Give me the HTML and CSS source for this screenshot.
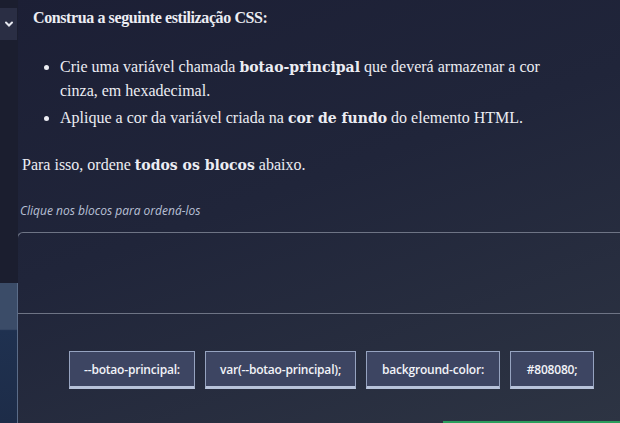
FILE: index.html
```html
<!DOCTYPE html>
<html lang="pt-BR">
<head>
  <meta charset="UTF-8" />
  <meta name="viewport" content="width=device-width, initial-scale=1.0" />
  <title>Exercício CSS</title>
  <link rel="stylesheet" href="styles.css">
</head>
<body>
  <aside class="side">
    <button class="side-toggle">
      <svg width="10" height="8" viewBox="0 0 10 8"><path d="M2 2.5 L5 5.5 L8 2.5" fill="none" stroke="#e6e8f0" stroke-width="2" stroke-linecap="round"/></svg>
    </button>
    <div class="side-panel"></div>
  </aside>

  <main class="content">
    <h2 class="task-title">Construa a seguinte estilização CSS:</h2>
    <ul class="task-list">
      <li>Crie uma variável chamada <strong>botao-principal</strong> que deverá armazenar a cor cinza, em hexadecimal.</li>
      <li>Aplique a cor da variável criada na <strong>cor de fundo</strong> do elemento HTML.</li>
    </ul>
    <p class="task-note">Para isso, ordene <strong>todos os blocos</strong> abaixo.</p>

    <p class="hint">Clique nos blocos para ordená-los</p>
    <div class="dropzone"></div>

    <div class="blocks">
      <button class="block">--botao-principal:</button>
      <button class="block">var(--botao-principal);</button>
      <button class="block">background-color:</button>
      <button class="block">#808080;</button>
    </div>

    <div class="footer">
      <button class="btn-next"></button>
    </div>
  </main>
</body>
</html>
```

FILE: styles.css
```css
* { box-sizing: border-box; }

body {
  margin: 0;
  width: 620px;
  height: 423px;
  overflow: hidden;
  display: flex;
  background: linear-gradient(160deg, #1c1f35 0%, #20253a 45%, #2d3443 100%);
  color: #ecedf3;
  font-family: 'Liberation Serif', serif;
}

.side {
  width: 18px;
  flex-shrink: 0;
  display: flex;
  flex-direction: column;
  justify-content: space-between;
  padding-top: 8px;
  background: #1b1e2f;
}

.side-toggle {
  width: 17px;
  height: 32px;
  border: none;
  padding: 0;
  background: #2a2e44;
  display: flex;
  justify-content: center;
  align-items: center;
}

.side-panel {
  height: 140px;
  border-right: 1px solid #5b6c88;
  background: linear-gradient(180deg, #3b4c68 0%, #3b4c68 33%, #1f3150 34%, #1d2c48 100%);
}

.content {
  flex: 1;
  min-width: 0;
  padding-top: 6px;
  overflow: hidden;
}

.task-title {
  margin: 0 0 25px 15px;
  font-size: 16px;
  line-height: 24px;
  font-weight: 600;
  letter-spacing: -0.4px;
}

.task-list {
  width: 540px;
  margin: 0 0 23px 0;
  padding-left: 42px;
  font-size: 16px;
  line-height: 24px;
}

.task-list li + li {
  margin-top: 3px;
}

.task-list strong,
.task-note strong {
  font-family: 'DejaVu Serif', serif;
  font-size: 14px;
  line-height: 1;
}

.task-note {
  margin: 0 0 25px 4px;
  font-size: 16px;
  line-height: 24px;
}

.hint {
  margin: 0 0 12px 2px;
  font-family: 'Open Sans', sans-serif;
  font-style: italic;
  font-size: 12px;
  line-height: 18px;
  color: #b9c0d6;
}

.dropzone {
  height: 82px;
  margin-left: -1px;
  margin-right: -20px;
  border: 1px solid #6e7485;
  border-right: none;
  border-radius: 6px 0 0 0;
}

.blocks {
  display: flex;
  gap: 10px;
  margin: 37px 0 0 51px;
}

.block {
  height: 38px;
  padding: 0;
  background: #3d4562;
  border: 1px solid #96a3c0;
  border-bottom: 3px solid #b8c3da;
  color: #f2f3f8;
  font-family: 'Open Sans', sans-serif;
  font-size: 12px;
  font-weight: 600;
  letter-spacing: -0.2px;
  white-space: nowrap;
}

.block:nth-child(1) { width: 126px; }
.block:nth-child(2) { width: 151px; }
.block:nth-child(3) { width: 134px; }
.block:nth-child(4) { width: 84px; }

.footer {
  display: flex;
  justify-content: flex-end;
  margin-top: 32px;
}

.btn-next {
  width: 177px;
  height: 2px;
  padding: 0;
  border: none;
  background: #2a9d5c;
}
```
